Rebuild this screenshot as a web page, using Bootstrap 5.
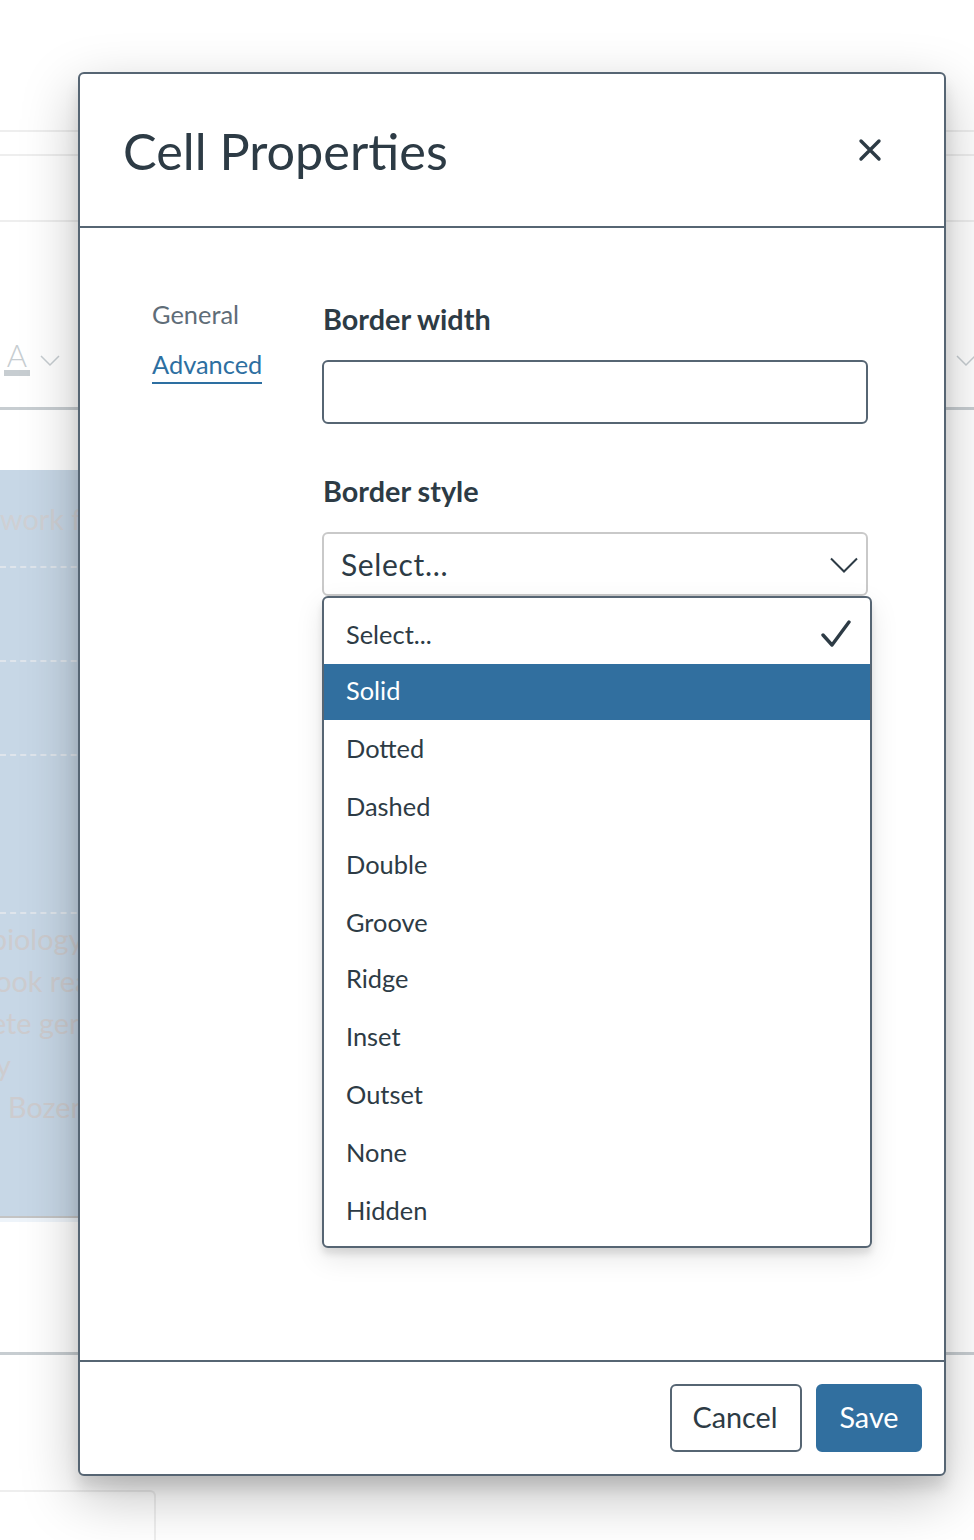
<!DOCTYPE html>
<html lang="en">
<head>
<meta charset="utf-8">
<title>Cell Properties</title>
<link href="https://cdn.jsdelivr.net/npm/bootstrap@5.3.0/dist/css/bootstrap.min.css" rel="stylesheet">
<style>
html,body{height:100%}
body{font-family:"Lato","Liberation Sans",sans-serif;color:#2d3b45;background:#fff;width:974px;height:1540px;overflow:hidden;position:relative;text-rendering:optimizeLegibility}
/* page behind the dialog */
.under{height:1540px;display:flex;flex-direction:column;color:#cfd0d4;font-size:28.8px;line-height:42px;overflow:hidden}
.rule-a{height:130px;border-bottom:2px solid #eeeeee;box-sizing:content-box;flex:none}
.rule-b{height:22px;border-bottom:2px solid #eeeeee;box-sizing:content-box;flex:none}
.rule-c{height:64px;border-bottom:2px solid #eeeeee;box-sizing:content-box;flex:none}
.tools{height:154px;border-bottom:3px solid #c7cdd1;box-sizing:content-box;padding:0 0 31px 4px;color:#c7cdd1;flex:none}
.fake-a{width:26px;height:24px;line-height:19px;font-size:31px;font-weight:300;text-align:center;border-bottom:6px solid #c7cdd1;box-sizing:content-box}
.chev-left{margin-left:10px;margin-bottom:9px}
.chev-right{margin-left:auto;margin-right:-2px;margin-bottom:9px}
.gap-61{height:60px;flex:none}
.blue-area{width:400px;height:748px;background:#c7d7e6;border-bottom:2px solid #c4c4c4;box-shadow:0 4px 0 #eef4fa;display:flex;flex-direction:column;flex:none}
.cell-a{height:98px;padding-top:28px;border-bottom:2px dashed #dfe5ec;white-space:nowrap}
.cell-b{height:94px;border-bottom:2px dashed #dfe5ec}
.cell-c{height:158px;border-bottom:2px dashed #dfe5ec}
.cell-d{padding-top:4px;white-space:nowrap;line-height:42px;color:#cdcccf}
.cell-d div{margin-left:-9px}
.cell-d .tail-0{margin-left:-21px}
.cell-d .tail-1{margin-left:-4px}
.cell-d .tail-2{margin-left:8px}
.gap-135{height:134px;border-bottom:3px solid #c7cdd1;box-sizing:content-box;flex:none}
.gap-box{height:135px;flex:none}
.box-under{width:156px;flex:1;border:2px solid #eeeeee;border-left:0;border-bottom:0;border-top-right-radius:6px}
/* dialog */
.sheet{position:absolute;left:78px;top:72px;width:868px;height:1404px;background:#fff;border:2px solid #566573;border-radius:6px;box-shadow:0 12px 14px rgba(0,0,0,.1),0 20px 56px rgba(0,0,0,.25);--bs-modal-header-padding:0;--bs-modal-padding:0}
.sheet-head{height:154px;padding:0 44px 0 43px;border-bottom:2px solid #566573;border-radius:0;flex:none}
.sheet-title{font-size:50.4px;font-weight:400;line-height:1;margin:2px 0 0;color:#2d3b45}
.close-x{width:24px;height:24px;padding:0;border:0;background:none;margin-right:18px;line-height:0}
.sheet-body{flex:1;padding:71px 76px 0 72px;display:flex;position:relative}
.side{width:170px;flex:none;font-size:25.4px;line-height:32px;margin-top:-1px}
.side-off{color:#5f6d78;text-decoration:none;margin-bottom:18px;display:block;height:32px}
.side-on{color:#2d6fa1;text-decoration:none;border-bottom:2px solid #2d6fa1;display:inline-block;height:36px}
.formcol{flex:1;position:relative}
.fld-label{font-size:28.8px;font-weight:700;line-height:36px;margin:2px 0 23px 1px;color:#2d3b45}
.fld-input{height:64px;border:2px solid #566573;border-radius:6px;box-shadow:none;margin-bottom:49px}
.fld-select{height:64px;border:2px solid #c9c9c9;border-radius:6px;padding:1px 8px 0 17px;font-size:30px;color:#2d3b45;background:#fff}
.select-text{letter-spacing:.65px}
.drop{position:absolute!important;left:0;top:297px;width:550px;height:652px;margin:0!important;padding:8px 0 6px;border:2px solid #566573;border-radius:6px;box-shadow:0 6px 7px rgba(0,0,0,.1),0 10px 28px rgba(0,0,0,.1);--bs-dropdown-link-color:#2d3b45;--bs-dropdown-link-active-bg:#316f9f;--bs-dropdown-link-active-color:#fff;--bs-dropdown-item-padding-x:22px;--bs-dropdown-item-padding-y:0}
.drop .dropdown-item{height:58px;display:flex;justify-content:space-between;align-items:center;font-size:25.4px;color:#2d3b45;padding:0 19px 2px 22px}
.drop .dropdown-item.active{height:56px;background:#316f9f;color:#fff;padding-bottom:3px}
.drop .short{height:56px;padding-bottom:3px}
.sheet-foot{height:114px;padding:0 22px;border-top:2px solid #566573;gap:14px;flex:none}
.act{height:68px;font-size:28.8px;border-radius:6px;padding:0 0 2px;line-height:1;margin:0}
.act-cancel{background:#fff;border:2px solid #566573;color:#2d3b45;width:132px;padding-right:2px}
.act-save{background:#316f9f;border:2px solid #316f9f;color:#fff;width:106px}
</style>
</head>
<body>
<div class="under">
  <div class="rule-a"></div>
  <div class="rule-b"></div>
  <div class="rule-c"></div>
  <div class="tools d-flex align-items-end">
    <div class="fake-a">A</div>
    <svg class="chev-left" width="20" height="12" viewBox="0 0 20 12" fill="none"><path d="M1 1l9 9 9-9" stroke="#c7cdd1" stroke-width="1.5"/></svg>
    <svg class="chev-right" width="20" height="12" viewBox="0 0 20 12" fill="none"><path d="M1 1l9 9 9-9" stroke="#c7cdd1" stroke-width="1.5"/></svg>
  </div>
  <div class="gap-61"></div>
  <div class="blue-area">
    <div class="cell-a">work for</div>
    <div class="cell-b"></div>
    <div class="cell-b"></div>
    <div class="cell-c"></div>
    <div class="cell-d">
      <div>biology</div>
      <div class="tail-0">book read</div>
      <div>ete gen</div>
      <div class="tail-1">y</div>
      <div class="tail-2">Bozen</div>
    </div>
  </div>
  <div class="gap-135"></div>
  <div class="gap-box"></div>
  <div class="box-under"></div>
</div>

<div class="modal-content sheet" role="dialog" aria-label="Cell Properties">
  <div class="modal-header sheet-head d-flex align-items-center justify-content-between">
    <h1 class="sheet-title">Cell Properties</h1>
    <button type="button" class="close-x" aria-label="Close">
      <svg width="24" height="24" viewBox="0 0 24 24" fill="none"><path d="M3 3l18 18M21 3L3 21" stroke="#2d3b45" stroke-width="3.4" stroke-linecap="round"/></svg>
    </button>
  </div>
  <div class="modal-body sheet-body">
    <nav class="side">
      <a class="side-off" href="#">General</a>
      <a class="side-on" href="#">Advanced</a>
    </nav>
    <div class="formcol">
      <label class="fld-label d-block">Border width</label>
      <input class="form-control fld-input" type="text">
      <label class="fld-label d-block">Border style</label>
      <div class="fld-select d-flex align-items-center justify-content-between">
        <span class="select-text">Select...</span>
        <svg width="28" height="16" viewBox="0 0 28 16" fill="none"><path d="M1 1.500l13 13 13-13" stroke="#2d3b45" stroke-width="2"/></svg>
      </div>
      <div class="dropdown-menu show drop">
        <a class="dropdown-item" href="#"><span>Select...</span>
          <svg width="30" height="30" viewBox="0 0 30 30" fill="none"><path d="M2 16l9 10L28 3" stroke="#2d3b45" stroke-width="3.4" stroke-linecap="round" stroke-linejoin="round"/></svg>
        </a>
        <a class="dropdown-item active" href="#">Solid</a>
        <a class="dropdown-item" href="#">Dotted</a>
        <a class="dropdown-item" href="#">Dashed</a>
        <a class="dropdown-item" href="#">Double</a>
        <a class="dropdown-item" href="#">Groove</a>
        <a class="dropdown-item short" href="#">Ridge</a>
        <a class="dropdown-item" href="#">Inset</a>
        <a class="dropdown-item" href="#">Outset</a>
        <a class="dropdown-item" href="#">None</a>
        <a class="dropdown-item" href="#">Hidden</a>
      </div>
    </div>
  </div>
  <div class="modal-footer sheet-foot d-flex justify-content-end align-items-center">
    <button type="button" class="btn act act-cancel">Cancel</button>
    <button type="button" class="btn act act-save">Save</button>
  </div>
</div>
<script src="https://cdn.jsdelivr.net/npm/bootstrap@5.3.0/dist/js/bootstrap.bundle.min.js"></script>
</body>
</html>
